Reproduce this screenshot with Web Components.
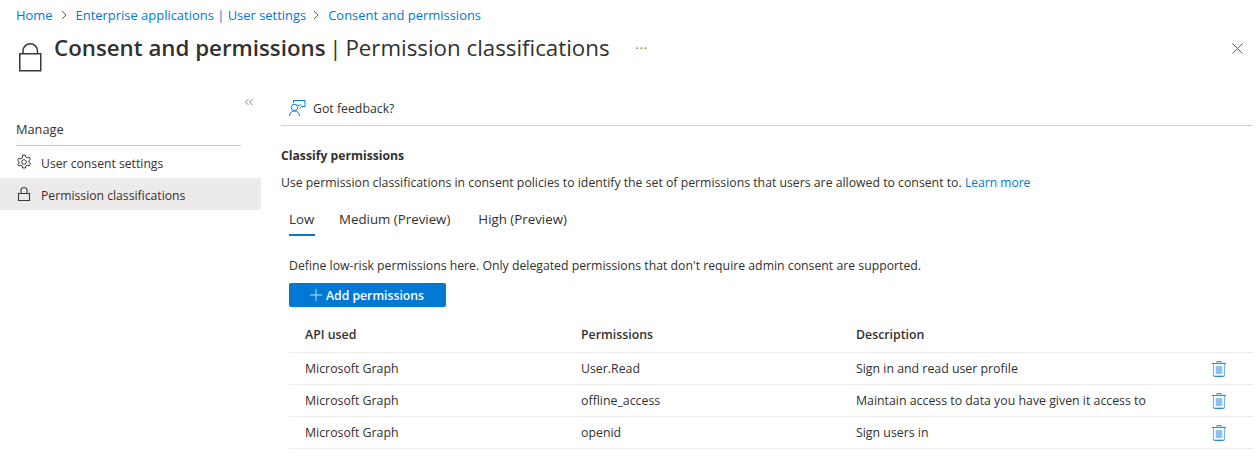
<!DOCTYPE html>
<html lang="en"><head><meta charset="utf-8"><title>Consent and permissions</title>
<style>
html,body{margin:0;padding:0;background:#fff}
body{width:1259px;height:475px;overflow:hidden;font-family:"Open Sans","Noto Sans",sans-serif;font-size:13px;color:#323130}
</style></head><body>
<az-blade></az-blade>
<script>
function def(name,css,html){
  customElements.define(name,class extends HTMLElement{
    constructor(){super();const r=this.attachShadow({mode:'open'});r.innerHTML=`<style>${css}</style>${typeof html==='function'?html(this):html}`;}
  });
}
const F=`font-family:"Open Sans","Noto Sans",sans-serif;`;
const CHEV=`<svg width="14" height="14" viewBox="0 0 14 14" fill="none" stroke="#605e5c"><path d="M5 3l4 4-4 4"/></svg>`;
def('az-breadcrumb',`:host{display:flex;align-items:center;height:16px;gap:4.5px;${F}font-size:12.95px;color:#0078d4}svg{flex:none}.s{display:flex;margin:0 1px 0 -2px}`,
 `<span>Home</span>${CHEV}<span>Enterprise applications | User settings</span><span class="s">${CHEV}</span><span>Consent and permissions</span>`);
def('az-title',`:host{display:flex;align-items:flex-start;${F}color:#323130}
 .ic{width:38px;flex:none;padding-top:10px;height:30px}
 svg{display:block}
 h1{margin:0;font-size:22.3px;font-weight:600;line-height:30px;white-space:nowrap}
 h1 span{font-weight:400}
 h1 .sep{margin:0 -2px}
 .more{margin-left:26px;letter-spacing:1px;font-size:12px;line-height:32px;color:#605e5c}
 .x{margin-left:auto;margin-right:15px;margin-top:9px}`,
 `<div class="ic"><svg width="28" height="29" viewBox="0 0 28 29" fill="none" stroke="#3b3a39" stroke-width="1.500"><path d="M3.750 10.750h21v17h-21z"/><path d="M7 10.500V8a7.250 7.250 0 0 1 14.500 0v2.500"/></svg></div><h1>Consent and permissions <span class="sep">|</span> <span>Permission classifications</span></h1><div class="more">···</div>
 <svg class="x" width="13" height="13" viewBox="0 0 13 13" stroke="#605e5c" fill="none"><path d="M1.500 1.500l10 10M11.500 1.500l-10 10"/></svg>`);
def('az-nav-item',`:host{display:flex;align-items:center;height:32px;padding-left:16px;gap:9px;color:#323130;font-size:12.2px;${F}}
 :host([active]){background:#edebe9}.i{width:16px;height:16px;display:flex;flex:none}.t{padding-top:2px}`,
 `<span class="i"><slot name="icon"></slot></span><span class="t"><slot></slot></span>`);
def('az-sidebar',`:host{display:block;width:261px;flex:none;${F}}
 .c{display:flex;justify-content:flex-end;padding-right:7px;height:16px;align-items:center;margin-top:4px}
 .h{margin:11px 20px 0 16px;padding-bottom:7px;border-bottom:1px solid #c8c6c4;font-size:12.8px;font-weight:500;line-height:17px;color:#323130}`,
 `<div class="c"><svg width="10" height="10" viewBox="0 0 10 10" fill="none" stroke="#8a8886"><path d="M4.500 2L1.500 5l3 3M8.500 2L5.500 5l3 3"/></svg></div><div class="h">Manage</div><slot></slot>`);
def('az-toolbar',`:host{display:flex;align-items:center;gap:7px;height:36px;padding:2px 0 0 8px;border-bottom:1px solid #d2d0ce;${F}font-size:12.3px;color:#323130;box-sizing:border-box}`,
 `<svg width="17" height="17" viewBox="0 0 17 17" fill="none" stroke="#0078d4"><path d="M4.500 3V.5h11.500v6h-3.500l-2 2"/><path d="M8.500 3.500l1.500 1.500 2.500-2" stroke-width=".9" transform="translate(0 1)"/><circle cx="5.500" cy="7.500" r="3.200"/><path d="M.5 16c0-3 2-5 5-5s5 2 5 5"/></svg><span>Got feedback?</span>`);
def('az-tabs',`:host{display:flex;gap:24px;${F}font-size:13.3px;color:#323130}
 span{display:block;padding:0 0 6px;height:18px;line-height:18px;border-bottom:2px solid transparent}
 .on{border-bottom-color:#0078d4;min-width:26px}`,
 `<span class="on">Low</span><span>Medium (Preview)</span><span style="margin-left:4px">High (Preview)</span>`);
def('az-button',`:host{display:flex;align-items:center;justify-content:center;gap:3px;width:155px;padding-right:2px;height:24px;background:#0078d4;border-radius:2px;color:#fff;font-weight:600;font-size:12.25px;${F}}`,
 `<svg width="14" height="14" viewBox="0 0 14 14" stroke="#bcdcf5" fill="none"><path d="M7 1v12M1 7h12"/></svg><slot></slot>`);
const TRASH=`<svg width="16" height="17" viewBox="0 0 16 17" fill="none"><path d="M2.500 4v12h11V4" stroke="#73b5ec" stroke-width="1.200"/><path d="M4.700 6h6.600v8H4.700z" fill="#8cc3ee"/><path d="M1 3.500h14" stroke="#2a85d6"/><path d="M6 3V1.500h4V3" stroke="#2a85d6"/><path d="M3.500 16.500h9" stroke="#2a85d6"/></svg>`;
def('az-row',`:host{display:grid;grid-template-columns:276px 275px 1fr 44px;align-items:center;height:32px;padding-left:16px;border-bottom:1px solid #edebe9;box-sizing:border-box;${F}font-size:12.33px;color:#323130}
 :host([head]){font-weight:600;height:37px}
 .t{display:flex;align-items:center;padding-left:2px}`,
 h=>`<span>${h.getAttribute('a')}</span><span>${h.getAttribute('b')}</span><span>${h.getAttribute('c')}</span>${h.hasAttribute('head')?'<span></span>':`<span class="t">${TRASH}</span>`}`);
def('az-main',`:host{display:block;flex:1;min-width:0;margin-right:6px;padding-left:20px;${F}font-size:12.27px;color:#323130}
 h2{margin:21px 0 0;font-size:12.2px;font-weight:700;line-height:18px}
 p{margin:0;white-space:nowrap;line-height:18px}
 .d{margin-top:9px}a{color:#0078d4;text-decoration:none;font-size:12.1px}
 .in{padding-left:8px}
 az-tabs{margin-top:18px}
 .e{margin-top:21px}
 az-button{margin-top:8px}
 .tb{margin-top:9px}`,
 `<az-toolbar></az-toolbar><h2>Classify permissions</h2><p class="d">Use permission classifications in consent policies to identify the set of permissions that users are allowed to consent to. <a>Learn more</a></p>
 <div class="in"><az-tabs></az-tabs><p class="e">Define low-risk permissions here. Only delegated permissions that don't require admin consent are supported.</p>
 <az-button>Add permissions</az-button>
 <div class="tb"><az-row head a="API used" b="Permissions" c="Description"></az-row>
 <az-row a="Microsoft Graph" b="User.Read" c="Sign in and read user profile"></az-row>
 <az-row a="Microsoft Graph" b="offline_access" c="Maintain access to data you have given it access to"></az-row>
 <az-row a="Microsoft Graph" b="openid" c="Sign users in"></az-row></div></div>`);
def('az-blade',`:host{display:block;padding-top:7px;${F}}
 az-breadcrumb{margin-left:16px}
 az-title{margin:10px 0 0 16px}
 .b{display:flex;margin-top:17px}`,
 `<az-breadcrumb></az-breadcrumb><az-title></az-title><div class="b"><az-sidebar>
 <az-nav-item><svg slot="icon" width="16" height="16" viewBox="0 0 16 16" fill="none" stroke="#3b3a39"><circle cx="8" cy="8" r="2.300"/><path d="M6.700 1h2.600l.4 2 1.500.8 1.900-.7 1.300 2.300-1.500 1.300v1.600l1.500 1.300-1.300 2.300-1.900-.7-1.500.8-.4 2H6.700l-.4-2-1.500-.8-1.900.7L1.600 10.600l1.500-1.300V7.700L1.600 6.400 2.900 4.100l1.900.7 1.500-.8z"/></svg>User consent settings</az-nav-item>
 <az-nav-item active><svg slot="icon" width="16" height="16" viewBox="0 0 16 16" fill="none" stroke="#3b3a39" stroke-width="1.100"><path d="M2.500 7.500h11v7h-11z"/><path d="M5 7.500V4.500a3 3 0 0 1 6 0v3"/></svg>Permission classifications</az-nav-item>
 </az-sidebar><az-main></az-main></div>`);
</script>
</body></html>
